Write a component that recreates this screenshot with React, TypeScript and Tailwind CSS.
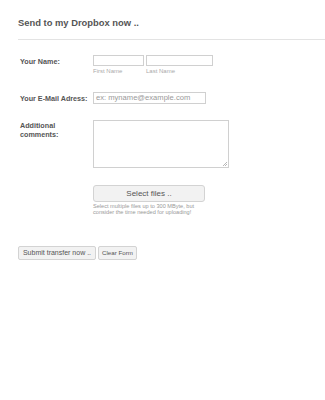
import React from "react";

export default function App() {
  const font = { fontFamily: '"Liberation Sans", Arial, sans-serif' };
  return (
    <div className="w-[325px] h-[400px] bg-white text-[#555]" style={font}>
      <div className="pl-[18px] pt-[16px]">
        <h1 className="text-[9.4px] leading-[13px] font-bold text-[#555]">Send to my Dropbox now ..</h1>
        <div className="mt-[10px] border-t border-[#e3e3e3]" />
      </div>

      <div className="pl-[20px] pt-[15px] flex">
        <div className="w-[73px] pt-[2px] text-[7.2px] leading-[10px] font-bold whitespace-nowrap text-[#555]">Your Name:</div>
        <div className="flex gap-[2px]">
          <div className="flex flex-col">
            <div className="w-[51px] h-[11px] border border-[#d0d0d0]" />
            <div className="text-[6px] leading-[10px] text-[#aaa]">First Name</div>
          </div>
          <div className="flex flex-col">
            <div className="w-[67px] h-[11px] border border-[#d0d0d0]" />
            <div className="text-[6px] leading-[10px] text-[#aaa]">Last Name</div>
          </div>
        </div>
      </div>

      <div className="pl-[20px] pt-[16px] flex">
        <div className="w-[73px] pt-[2px] text-[7.2px] leading-[10px] font-bold whitespace-nowrap text-[#555]">Your E-Mail Adress:</div>
        <div className="w-[113px] h-[12px] border border-[#d0d0d0] px-[2px] text-[7.6px] leading-[10px] text-[#999] whitespace-nowrap">
          ex: myname@example.com
        </div>
      </div>

      <div className="pl-[20px] pt-[16px] flex">
        <div className="w-[73px] pt-[1px] text-[7.2px] leading-[9px] font-bold text-[#555]">
          Additional
          <br />
          comments:
        </div>
        <div className="relative w-[136px] h-[48px] border border-[#d0d0d0]">
          <svg className="absolute right-[1px] bottom-[1px]" width="5" height="5" viewBox="0 0 5 5">
            <path d="M1 5 L5 1 M3 5 L5 3" stroke="#999" strokeWidth="0.7" />
          </svg>
        </div>
      </div>

      <div className="pl-[93px] pt-[17px]">
        <div className="w-[112px] h-[17px] rounded-[3px] border border-[#d3d3d3] bg-[#f2f2f2] flex items-center justify-center text-[8px] text-[#555]">
          Select files ..
        </div>
        <div className="mt-[1px] text-[5.6px] leading-[6px] text-[#999]">
          Select multiple files up to 300 MByte, but
          <br />
          consider the time needed for uploading!
        </div>
      </div>

      <div className="pl-[18px] pt-[31px] flex gap-[2px]">
        <div className="w-[78px] h-[14px] border border-[#d3d3d3] bg-[#f2f2f2] rounded-[2px] flex items-center justify-center text-[7px] text-[#555] whitespace-nowrap">
          Submit transfer now ..
        </div>
        <div className="w-[39px] h-[14px] border border-[#d3d3d3] bg-[#f2f2f2] rounded-[2px] flex items-center justify-center text-[6.2px] font-normal text-[#555] whitespace-nowrap">
          Clear Form
        </div>
      </div>
    </div>
  );
}
